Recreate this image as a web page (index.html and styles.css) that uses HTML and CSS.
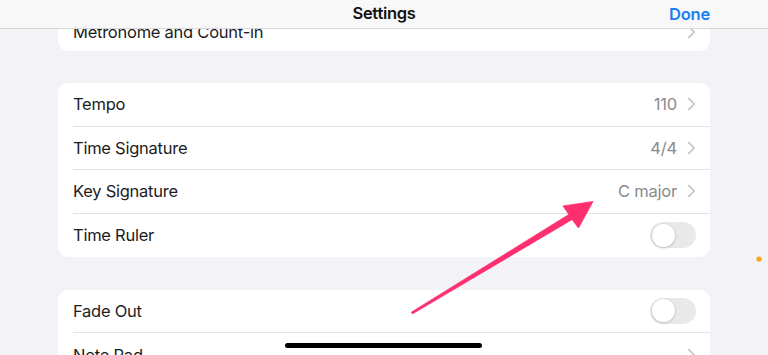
FILE: index.html
```html
<!DOCTYPE html>
<html>
<head>
<meta charset="utf-8">
<link rel="stylesheet" href="styles.css">
</head>
<body>
<div class="screen">
  <div class="content">
    <div class="card first">
      <div class="row">
        <div class="row-inner last shifted">
          <span class="label">Metronome and Count-in</span>
          <span class="trail"><svg class="chev" width="9" height="14" viewBox="0 0 9 14"><path d="M1.8 1.6 L7.2 7 L1.8 12.4" /></svg></span>
        </div>
      </div>
    </div>

    <div class="card">
      <div class="row">
        <div class="row-inner">
          <span class="label">Tempo</span>
          <span class="trail"><span class="value">110</span><svg class="chev" width="9" height="14" viewBox="0 0 9 14"><path d="M1.8 1.6 L7.2 7 L1.8 12.4" /></svg></span>
        </div>
      </div>
      <div class="row">
        <div class="row-inner">
          <span class="label">Time Signature</span>
          <span class="trail"><span class="value">4/4</span><svg class="chev" width="9" height="14" viewBox="0 0 9 14"><path d="M1.8 1.6 L7.2 7 L1.8 12.4" /></svg></span>
        </div>
      </div>
      <div class="row">
        <div class="row-inner">
          <span class="label">Key Signature</span>
          <span class="trail"><span class="value">C major</span><svg class="chev" width="9" height="14" viewBox="0 0 9 14"><path d="M1.8 1.6 L7.2 7 L1.8 12.4" /></svg></span>
        </div>
      </div>
      <div class="row">
        <div class="row-inner last">
          <span class="label">Time Ruler</span>
          <span class="trail"><span class="toggle"><span class="knob"></span></span></span>
        </div>
      </div>
    </div>

    <div class="card">
      <div class="row">
        <div class="row-inner">
          <span class="label">Fade Out</span>
          <span class="trail"><span class="toggle"><span class="knob"></span></span></span>
        </div>
      </div>
      <div class="row">
        <div class="row-inner last">
          <span class="label">Note Pad</span>
          <span class="trail"><svg class="chev" width="9" height="14" viewBox="0 0 9 14"><path d="M1.8 1.6 L7.2 7 L1.8 12.4" /></svg></span>
        </div>
      </div>
    </div>
  </div>

  <div class="navbar">
    <span class="title">Settings</span>
    <span class="done">Done</span>
  </div>

  <svg class="annot" width="768" height="355" viewBox="0 0 768 355">
    <polygon class="arrow" points="411.4,312.2 568.9,214.4 563,206 593,201.5 578.5,228 572.1,219.6 412.6,313.8" />
    <circle class="dot" cx="759" cy="259" r="2.6" />
  </svg>

  <div class="home-indicator"></div>
</div>
</body>
</html>
```

FILE: styles.css
```css
* { box-sizing: border-box; }
html, body {
  margin: 0;
  padding: 0;
}
body {
  width: 768px;
  height: 355px;
  overflow: hidden;
  background: #f2f2f7;
  font-family: Inter, "Noto Sans", "Liberation Sans", sans-serif;
  color: #1c1c1e;
}
.screen {
  position: relative;
  width: 768px;
  height: 355px;
  overflow: hidden;
}
.content {
  display: flex;
  flex-direction: column;
  gap: 32.5px;
  padding: 0 58px;
  margin-top: -37px;
}
.card {
  background: #ffffff;
  border-radius: 10px;
  overflow: hidden;
}
.card.first {
  padding-top: 44px;
}
.row {
  padding-left: 15px;
}
.row-inner {
  height: 43.5px;
  display: flex;
  align-items: center;
  justify-content: space-between;
  padding-right: 14px;
  border-bottom: 1px solid #e3e3e7;
}
.row-inner.last {
  border-bottom: none;
}
.row-inner.shifted {
  padding-top: 6px;
}
.label {
  font-size: 16.5px;
  letter-spacing: -0.25px;
}
.trail {
  display: flex;
  align-items: center;
}
.value {
  font-size: 16.5px;
  letter-spacing: -0.2px;
  color: #8a8a8e;
  margin-right: 10px;
}
.chev {
  display: block;
}
.chev path {
  fill: none;
  stroke: #c4c4c8;
  stroke-width: 1.7;
  stroke-linecap: round;
  stroke-linejoin: round;
}
.toggle {
  display: flex;
  align-items: center;
  width: 46px;
  height: 26px;
  border-radius: 13px;
  background: #e9e9eb;
  padding: 0 2px;
}
.knob {
  width: 23px;
  height: 23px;
  border-radius: 50%;
  background: #ffffff;
  box-shadow: 0 1px 3px rgba(0,0,0,0.18), 0 0 0 0.5px rgba(0,0,0,0.06);
}
.navbar {
  position: absolute;
  top: 0;
  left: 0;
  right: 0;
  height: 29px;
  background: rgba(248,248,248,0.96);
  border-bottom: 1px solid #d9d9dc;
  display: flex;
  align-items: center;
  justify-content: center;
  padding-bottom: 3px;
}
.title {
  font-size: 16.5px;
  font-weight: 600;
  letter-spacing: -0.3px;
  color: #111111;
}
.done {
  position: absolute;
  right: 58px;
  top: 4px;
  font-size: 16.5px;
  font-weight: 600;
  letter-spacing: -0.2px;
  color: #1a7ff5;
}
.annot {
  position: absolute;
  top: 0;
  left: 0;
  pointer-events: none;
}
.arrow {
  fill: #fe2f6f;
  stroke: #fe2f6f;
  stroke-width: 0.8;
  stroke-linejoin: round;
}
.dot {
  fill: #ffa21a;
}
.home-indicator {
  position: absolute;
  left: 285px;
  top: 343px;
  width: 197px;
  height: 5px;
  border-radius: 3px;
  background: #000000;
}
```
